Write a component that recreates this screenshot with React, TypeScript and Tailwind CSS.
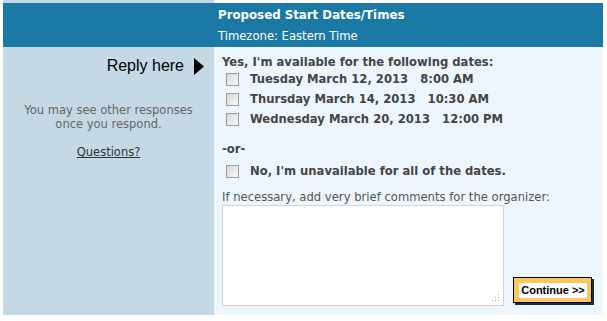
import React from 'react';

const dates = [
  { day: 'Tuesday March 12, 2013', time: '8:00 AM' },
  { day: 'Thursday March 14, 2013', time: '10:30 AM' },
  { day: 'Wednesday March 20, 2013', time: '12:00 PM' },
];

const Box: React.FC = () => (
  <span className="inline-block w-[13px] h-[13px] shrink-0 border border-[#9c9c9c] bg-gradient-to-br from-[#d8d8d8] to-[#f8f8f8]" />
);

const App: React.FC = () => {
  return (
    <div className="w-[607px] h-[321px] bg-white pl-[3px] font-['DejaVu_Sans',sans-serif]">
      <div className="w-[600px]">
        <div className="flex h-[3px]">
          <div className="w-[211px] bg-[#c4d9e4]" />
        </div>
        <div className="h-[44px] bg-[#1b79a5] text-white pl-[215px] pt-[4px]">
          <div className="text-[11.8px] font-bold leading-[16px]">Proposed Start Dates/Times</div>
          <div className="text-[11.6px] leading-[16px] mt-[5px]">Timezone: Eastern Time</div>
        </div>
        <div className="flex h-[268px]">
          <div className="w-[211px] bg-[#c4d9e4] flex flex-col items-center">
            <div className="self-end flex items-center mt-[10px] mr-[10px] gap-[10px]">
              <span className="font-['Liberation_Sans',sans-serif] text-[16px] text-black leading-[18px]">Reply here</span>
              <svg width="10" height="17" viewBox="0 0 10 17">
                <polygon points="0,0 10,8.5 0,17" fill="#000" />
              </svg>
            </div>
            <p className="mt-[28px] text-[11.5px] leading-[14px] text-[#666] text-center">
              You may see other responses
              <br />
              once you respond.
            </p>
            <a className="mt-[14px] text-[11.5px] leading-[14px] text-[#333] underline">Questions?</a>
          </div>
          <div className="flex-1 bg-[#eef6fd] pl-[8px] pt-[7px] text-[#444]">
            <div className="text-[11.6px] font-bold leading-[16px]">Yes, I'm available for the following dates:</div>
            <div className="mt-[2px] flex flex-col gap-[6px]">
              {dates.map((d) => (
                <label key={d.day} className="flex items-center pl-[4px] gap-[11px] text-[11.6px] font-bold leading-[14px]">
                  <Box />
                  <span className="whitespace-pre">
                    {d.day}   {d.time}
                  </span>
                </label>
              ))}
            </div>
            <div className="mt-[15px] text-[11.6px] font-bold leading-[16px]">-or-</div>
            <label className="mt-[7px] flex items-center pl-[4px] gap-[11px] text-[11.6px] font-bold leading-[14px]">
              <Box />
              <span>No, I'm unavailable for all of the dates.</span>
            </label>
            <div className="mt-[12px] text-[11.6px] leading-[14px] text-[#555]">
              If necessary, add very brief comments for the organizer:
            </div>
            <div className="mt-[1px] flex items-end gap-[9px]">
              <div className="relative w-[282px] h-[101px] bg-white border border-[#d4d4d4]">
                <svg className="absolute right-[3px] bottom-[3px]" width="8" height="8" viewBox="0 0 8 8">
                  <rect x="6" y="0" width="1" height="1" fill="#aaa" />
                  <rect x="6" y="3" width="1" height="1" fill="#aaa" />
                  <rect x="3" y="3" width="1" height="1" fill="#aaa" />
                  <rect x="6" y="6" width="1" height="1" fill="#aaa" />
                  <rect x="3" y="6" width="1" height="1" fill="#aaa" />
                  <rect x="0" y="6" width="1" height="1" fill="#aaa" />
                </svg>
              </div>
              <button className="mb-[3px] w-[79px] h-[26px] border border-black bg-[#fcc55f] shadow-[2px_2px_0_#1c2450] pl-[5px] pr-[4px] pt-[5px] pb-[4px]">
                <span className="flex h-full items-center justify-center whitespace-nowrap bg-white text-black font-['Liberation_Sans',sans-serif] font-bold text-[11px] leading-[15px]">
                  Continue &gt;&gt;
                </span>
              </button>
            </div>
          </div>
        </div>
      </div>
    </div>
  );
};

export default App;
